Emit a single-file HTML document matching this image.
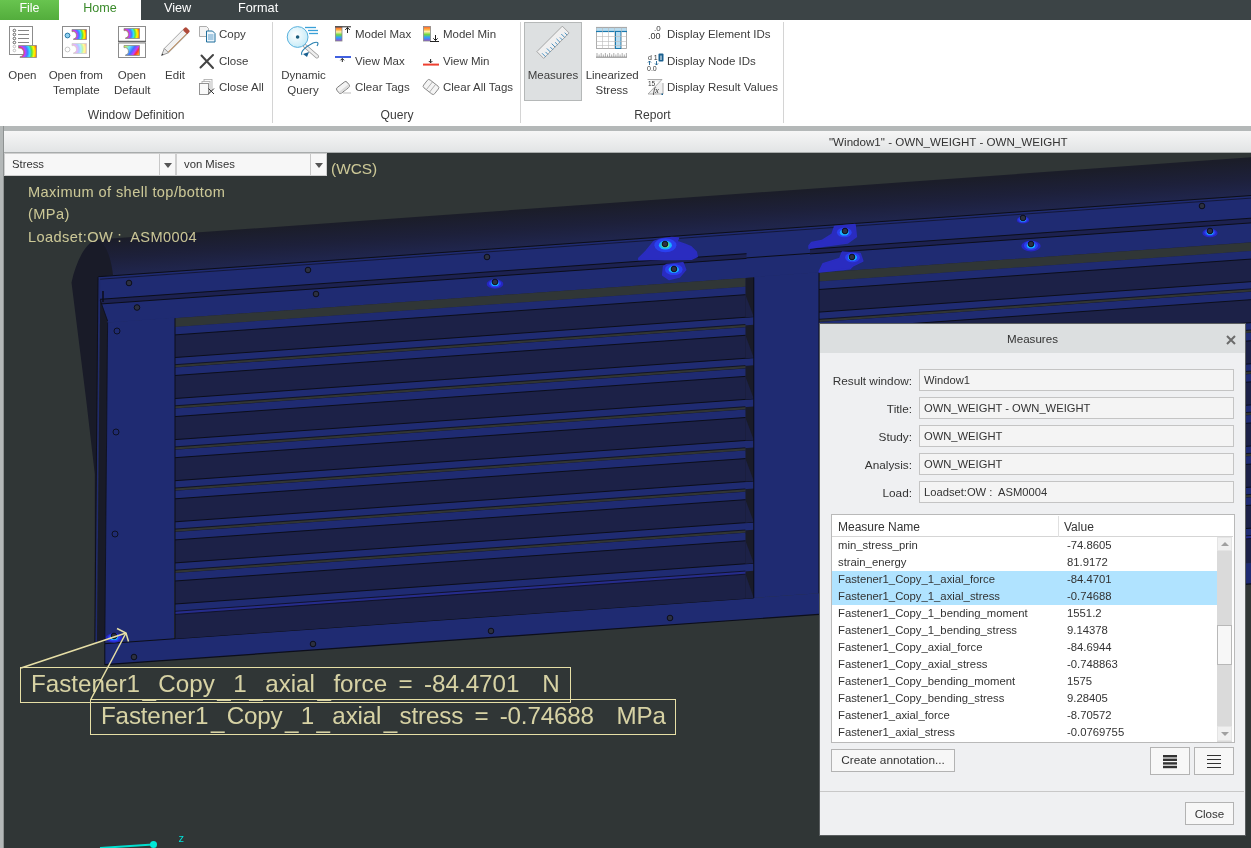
<!DOCTYPE html><html><head><meta charset="utf-8"><style>
*{box-sizing:border-box;margin:0;padding:0}
html,body{width:1251px;height:848px;overflow:hidden;background:#303636;font-family:"Liberation Sans",sans-serif;position:relative}
#root{position:absolute;left:0;top:0;width:1251px;height:848px;will-change:transform;background:#303636}
.abs{position:absolute}
.t{position:absolute;white-space:nowrap;line-height:1}
#tabs{position:absolute;left:0;top:0;width:1251px;height:20px;background:#3c4446}
#file{position:absolute;left:0;top:0;width:59px;height:20px;background:linear-gradient(#68c44f,#53ad3c);color:#fff;font-size:12.5px;text-align:center;line-height:16px}
#home{position:absolute;left:59px;top:0;width:82px;height:20px;background:#fff;color:#3a8a2a;font-size:12.6px;text-align:center;line-height:16px}
.tab{position:absolute;top:0;color:#fff;font-size:12.7px;line-height:16px}
#ribbon{position:absolute;left:0;top:20px;width:1251px;height:106px;background:#fff}
.rl{position:absolute;font-size:11.5px;color:#3c3c3c;white-space:pre;line-height:15px}
.sep{position:absolute;top:22px;width:1px;height:101px;background:#d4d4d4}
#gbar{position:absolute;left:0;top:126px;width:1251px;height:5px;background:#b4b8b8}
#lbar{position:absolute;left:0;top:126px;width:4px;height:722px;background:#b4b8b8;border-right:1px solid #8e9292}
#wtitle{position:absolute;left:4px;top:131px;width:1247px;height:22px;background:linear-gradient(#f6f6f6,#e2e4e5);border-bottom:1px solid #a8acac}
.dd{position:absolute;top:153px;height:23px;background:#f7f7f7;border:1px solid #cfcfcf;font-size:11.3px;color:#333;line-height:21px;padding-left:7px}
.dd .ar{position:absolute;right:0;top:0;width:16px;height:21px;border-left:1px solid #c8c8c8}
.dd .ar:after{content:"";position:absolute;left:4px;top:9px;border-left:4px solid transparent;border-right:4px solid transparent;border-top:5px solid #555}
.ov{position:absolute;color:rgba(232,226,168,0.85);font-size:14.6px;letter-spacing:0.4px;white-space:pre;line-height:1}
.ann{position:absolute;border:1.5px solid #e6dfa6;color:rgba(238,232,180,0.88);font-size:24.2px;white-space:pre;line-height:32px;padding-left:10px}
.us{margin:0 2.5px;position:relative;top:4px}.sp{letter-spacing:4.6px}
#dlg{position:absolute;left:819px;top:323px;width:427px;height:513px;background:#eff0f2;border:1px solid #5a5e60}
#dlgt{position:absolute;left:0;top:0;width:425px;height:29px;background:#dcdfe0;font-size:11.6px;color:#333;text-align:center;line-height:30px}
.lab{position:absolute;font-size:11.8px;color:#333;text-align:right;white-space:nowrap;line-height:14px}
.fld{position:absolute;left:99px;width:315px;height:22px;background:#f4f4f4;border:1px solid #c4c4c4;font-size:11.2px;color:#333;line-height:20px;padding-left:4px;white-space:pre}
#tbl{position:absolute;left:11px;top:190px;width:404px;height:229px;background:#fff;border:1px solid #b9b9b9;overflow:hidden}
.row{position:absolute;left:1px;height:17px;font-size:11.3px;color:#333;line-height:17px;white-space:nowrap}
.btn{position:absolute;background:#f7f7f7;border:1px solid #b3b3b3;font-size:12px;color:#333;text-align:center}
</style></head><body><div id="root">
<div id="tabs"><div id="file">File</div><div id="home">Home</div><div class="tab" style="left:164px">View</div><div class="tab" style="left:238px">Format</div></div>
<div id="ribbon"></div>
<div class="abs" style="left:524px;top:22px;width:58px;height:79px;background:#dde0e1;border:1px solid #b5b8b8"></div>
<div class="rl" style="left:22.4px;top:68px;width:100px;margin-left:-50px;text-align:center">Open</div>
<div class="rl" style="left:75.8px;top:68px;width:100px;margin-left:-50px;text-align:center">Open from</div>
<div class="rl" style="left:76.4px;top:83px;width:100px;margin-left:-50px;text-align:center">Template</div>
<div class="rl" style="left:131.8px;top:68px;width:100px;margin-left:-50px;text-align:center">Open</div>
<div class="rl" style="left:132.2px;top:83px;width:100px;margin-left:-50px;text-align:center">Default</div>
<div class="rl" style="left:175.0px;top:68px;width:100px;margin-left:-50px;text-align:center">Edit</div>
<div class="rl" style="left:303.5px;top:68px;width:100px;margin-left:-50px;text-align:center">Dynamic</div>
<div class="rl" style="left:303.0px;top:83px;width:100px;margin-left:-50px;text-align:center">Query</div>
<div class="rl" style="left:553.0px;top:68px;width:100px;margin-left:-50px;text-align:center">Measures</div>
<div class="rl" style="left:612.2px;top:68px;width:100px;margin-left:-50px;text-align:center">Linearized</div>
<div class="rl" style="left:611.8px;top:83px;width:100px;margin-left:-50px;text-align:center">Stress</div>
<div class="rl" style="left:136.2px;top:108px;width:140px;margin-left:-70px;text-align:center;font-size:12.1px">Window Definition</div>
<div class="rl" style="left:397.0px;top:108px;width:140px;margin-left:-70px;text-align:center;font-size:12.1px">Query</div>
<div class="rl" style="left:652.5px;top:108px;width:140px;margin-left:-70px;text-align:center;font-size:12.1px">Report</div>
<div class="rl" style="left:219px;top:27px">Copy</div>
<div class="rl" style="left:219px;top:54px">Close</div>
<div class="rl" style="left:219px;top:80px">Close All</div>
<div class="rl" style="left:355px;top:27px">Model Max</div>
<div class="rl" style="left:355px;top:54px">View Max</div>
<div class="rl" style="left:355px;top:80px">Clear Tags</div>
<div class="rl" style="left:443px;top:27px">Model Min</div>
<div class="rl" style="left:443px;top:54px">View Min</div>
<div class="rl" style="left:443px;top:80px">Clear All Tags</div>
<div class="rl" style="left:667px;top:27px">Display Element IDs</div>
<div class="rl" style="left:667px;top:54px">Display Node IDs</div>
<div class="rl" style="left:667px;top:80px">Display Result Values</div>
<div class="sep" style="left:272px"></div>
<div class="sep" style="left:520px"></div>
<div class="sep" style="left:783px"></div>
<svg class="abs" style="left:0;top:0" width="800" height="126">
<defs>
<radialGradient id="rg1" gradientUnits="userSpaceOnUse" cx="18.5" cy="52.4" r="19"><stop offset="0.25" stop-color="#ff3030"/><stop offset="0.35" stop-color="#c040ff"/><stop offset="0.48" stop-color="#4080ff"/><stop offset="0.6" stop-color="#30e0ff"/><stop offset="0.7" stop-color="#60e040"/><stop offset="0.82" stop-color="#ffff00"/><stop offset="0.92" stop-color="#ffa000"/><stop offset="1" stop-color="#ff2020"/></radialGradient>
<radialGradient id="rg2" gradientUnits="userSpaceOnUse" cx="72.0" cy="35.3" r="15"><stop offset="0.25" stop-color="#ff3030"/><stop offset="0.35" stop-color="#c040ff"/><stop offset="0.48" stop-color="#4080ff"/><stop offset="0.6" stop-color="#30e0ff"/><stop offset="0.7" stop-color="#60e040"/><stop offset="0.82" stop-color="#ffff00"/><stop offset="0.92" stop-color="#ffa000"/><stop offset="1" stop-color="#ff2020"/></radialGradient>
<radialGradient id="rg3" gradientUnits="userSpaceOnUse" cx="72.0" cy="49.3" r="15"><stop offset="0.25" stop-color="#ff3030"/><stop offset="0.35" stop-color="#c040ff"/><stop offset="0.48" stop-color="#4080ff"/><stop offset="0.6" stop-color="#30e0ff"/><stop offset="0.7" stop-color="#60e040"/><stop offset="0.82" stop-color="#ffff00"/><stop offset="0.92" stop-color="#ffa000"/><stop offset="1" stop-color="#ff2020"/></radialGradient>
<radialGradient id="rg4" gradientUnits="userSpaceOnUse" cx="124.0" cy="34.3" r="16"><stop offset="0.25" stop-color="#ff3030"/><stop offset="0.35" stop-color="#c040ff"/><stop offset="0.48" stop-color="#4080ff"/><stop offset="0.6" stop-color="#30e0ff"/><stop offset="0.7" stop-color="#60e040"/><stop offset="0.82" stop-color="#ffff00"/><stop offset="0.92" stop-color="#ffa000"/><stop offset="1" stop-color="#ff2020"/></radialGradient>
<linearGradient id="rg5" gradientUnits="userSpaceOnUse" x1="124" y1="45" x2="140" y2="56"><stop offset="0" stop-color="#ffff00"/><stop offset="0.3" stop-color="#60e0ff"/><stop offset="0.5" stop-color="#4070ff"/><stop offset="0.65" stop-color="#c040ff"/><stop offset="0.75" stop-color="#ff3030"/><stop offset="1" stop-color="#ffff00"/></linearGradient>
<linearGradient id="bar" x1="0" y1="0" x2="0" y2="1"><stop offset="0" stop-color="#ff5a30"/><stop offset="0.2" stop-color="#ffb040"/><stop offset="0.35" stop-color="#fff0b0"/><stop offset="0.55" stop-color="#70d840"/><stop offset="0.75" stop-color="#30a0ff"/><stop offset="1" stop-color="#9050d0"/></linearGradient>
<radialGradient id="lens" cx="0.4" cy="0.4" r="0.6"><stop offset="0" stop-color="#ffffff"/><stop offset="1" stop-color="#c8ecf8"/></radialGradient>
</defs>
<rect x="9.5" y="26.5" width="23" height="28" fill="#fff" stroke="#8c8c8c" stroke-width="1"/>
<circle cx="14.4" cy="30.5" r="1.3" fill="none" stroke="#555" stroke-width="0.9"/>
<line x1="18" y1="30.5" x2="29" y2="30.5" stroke="#777" stroke-width="0.9"/>
<circle cx="14.4" cy="34.5" r="1.3" fill="none" stroke="#555" stroke-width="0.9"/>
<line x1="18" y1="34.5" x2="29" y2="34.5" stroke="#777" stroke-width="0.9"/>
<circle cx="14.4" cy="38.5" r="1.3" fill="none" stroke="#555" stroke-width="0.9"/>
<line x1="18" y1="38.5" x2="29" y2="38.5" stroke="#777" stroke-width="0.9"/>
<circle cx="14.4" cy="42.5" r="1.3" fill="none" stroke="#555" stroke-width="0.9"/>
<line x1="18" y1="42.5" x2="29" y2="42.5" stroke="#777" stroke-width="0.9"/>
<circle cx="14.4" cy="46.5" r="1.3" fill="none" stroke="#bbb" stroke-width="0.9"/>
<circle cx="14.4" cy="50.5" r="1.3" fill="none" stroke="#bbb" stroke-width="0.9"/>
<path d="M18.5,45.5 L36.5,45.5 L36.5,57.5 L20.0,57.5 L20.0,56.8 A4.3,4.3 0 0 0 18.5,48.1 Z" fill="url(#rg1)" stroke="#8a8a8a" stroke-width="0.8"/>
<rect x="62.5" y="26.5" width="27" height="31" fill="#fff" stroke="#8c8c8c" stroke-width="1"/>
<circle cx="67.5" cy="35.5" r="2.4" fill="#8fd0f0" stroke="#2a7aa8" stroke-width="1"/>
<circle cx="67.5" cy="49.5" r="2.4" fill="#fff" stroke="#c8c8c8" stroke-width="1"/>
<path d="M72.0,29.5 L86.5,29.5 L86.5,39.5 L73.5,39.5 L73.5,38.9 A3.6,3.6 0 0 0 72.0,31.7 Z" fill="url(#rg2)" stroke="#8a8a8a" stroke-width="0.8"/>
<path d="M72.0,43.5 L86.5,43.5 L86.5,53.5 L73.5,53.5 L73.5,52.9 A3.6,3.6 0 0 0 72.0,45.7 Z" fill="url(#rg3)" stroke="#8a8a8a" stroke-width="0.8" opacity="0.4"/>
<rect x="118.5" y="26.5" width="27" height="15" fill="#fff" stroke="#8c8c8c" stroke-width="1"/>
<line x1="118" y1="41.5" x2="146" y2="41.5" stroke="#666" stroke-width="1.5"/>
<rect x="118.5" y="43" width="27" height="14.5" fill="#fff" stroke="#8c8c8c" stroke-width="1"/>
<path d="M124.0,28.5 L139.5,28.5 L139.5,38.5 L125.5,38.5 L125.5,37.9 A3.6,3.6 0 0 0 124.0,30.7 Z" fill="url(#rg4)" stroke="#8a8a8a" stroke-width="0.8"/>
<path d="M124.0,45.5 L139.5,45.5 L139.5,55.5 L125.5,55.5 L125.5,54.9 A3.6,3.6 0 0 0 124.0,47.7 Z" fill="url(#rg5)" stroke="#8a8a8a" stroke-width="0.8"/>
<g transform="translate(161.5,55.5) rotate(-45)"><polygon points="0,0 7,-3 7,3" fill="#e8e8e8" stroke="#777" stroke-width="0.7"/><polygon points="0,0 2,-0.9 2,0.9" fill="#333"/><rect x="7" y="-3" width="27" height="6" fill="#f2f2f2" stroke="#888" stroke-width="0.7"/><line x1="7" y1="2.4" x2="34" y2="2.4" stroke="#b07030" stroke-width="0.9"/><rect x="33" y="-3.2" width="4.5" height="6.4" rx="1.5" fill="#b04a3a"/></g>
<path d="M199.5,26.5 h7 l2,2 v8 h-9 z" fill="#f4f4f4" stroke="#999" stroke-width="0.8"/>
<path d="M206.5,31 h6 l2.5,2.5 v8.5 h-8.5 z" fill="#eef6fb" stroke="#1f6e9c" stroke-width="1"/>
<line x1="208" y1="35" x2="213.5" y2="35" stroke="#3a8ac0" stroke-width="0.8"/>
<line x1="208" y1="37" x2="213.5" y2="37" stroke="#3a8ac0" stroke-width="0.8"/>
<line x1="208" y1="39" x2="213.5" y2="39" stroke="#3a8ac0" stroke-width="0.8"/>
<path d="M200.5,67.5 L213,55 M201.5,55.5 L213,68" stroke="#444" stroke-width="2" stroke-linecap="round"/>
<rect x="204" y="79.5" width="8" height="11" fill="#fafafa" stroke="#aaa" stroke-width="0.8"/>
<rect x="202" y="81.5" width="8" height="11" fill="#fafafa" stroke="#aaa" stroke-width="0.8"/>
<rect x="199.5" y="83.5" width="9" height="11" fill="#fafafa" stroke="#888" stroke-width="0.9"/>
<path d="M208.5,88.5 L214,94 M214,88.5 L208.5,94" stroke="#333" stroke-width="1"/>
<line x1="305" y1="46" x2="317" y2="56.5" stroke="#999" stroke-width="4" stroke-linecap="round"/>
<line x1="305" y1="46" x2="317" y2="56.5" stroke="#eee" stroke-width="2.4" stroke-linecap="round"/>
<circle cx="297.6" cy="37" r="10.4" fill="url(#lens)" stroke="#58b0dc" stroke-width="1"/>
<circle cx="297.6" cy="37" r="1.8" fill="#1a5a7a"/>
<g stroke="#3aa0d8" stroke-width="1.3"><line x1="305" y1="27.5" x2="316" y2="27.5"/><line x1="308" y1="30.5" x2="318" y2="30.5"/><line x1="309" y1="33.5" x2="318" y2="33.5"/></g>
<path d="M302,55 C300,52 305,47 313,43 C318,41 319,43 317,46" fill="none" stroke="#2a80b0" stroke-width="1.1"/>
<polygon points="303,54 309,52 307,57" fill="#1a6090"/>
<rect x="335.5" y="27" width="6.5" height="14" fill="url(#bar)" stroke="#888" stroke-width="0.8"/>
<line x1="335" y1="26.8" x2="351" y2="26.8" stroke="#222" stroke-width="1"/>
<path d="M347.5,33 V27.5 M345.2,30 L347.5,27.5 L349.8,30" fill="none" stroke="#222" stroke-width="1"/>
<line x1="335" y1="57" x2="351" y2="57" stroke="#4060e0" stroke-width="2"/>
<path d="M342.3,62 V58.5 M340.5,60.3 L342.3,58.5 L344.1,60.3" fill="none" stroke="#222" stroke-width="1"/>
<g transform="translate(343,87.5) rotate(-38)"><rect x="-6.5" y="-3.5" width="13" height="7" rx="2" fill="#f4f4f4" stroke="#777" stroke-width="0.9"/><rect x="-6" y="1" width="12" height="2" fill="#ddd"/></g>
<line x1="343" y1="93" x2="351" y2="93" stroke="#aaa" stroke-width="0.8"/>
<rect x="423.5" y="26.5" width="7" height="14.5" fill="url(#bar)" stroke="#888" stroke-width="0.8"/>
<line x1="430" y1="41.5" x2="439" y2="41.5" stroke="#222" stroke-width="1"/>
<path d="M435.5,35 V40.5 M433.3,38.3 L435.5,40.5 L437.7,38.3" fill="none" stroke="#222" stroke-width="1"/>
<line x1="423" y1="64.6" x2="439" y2="64.6" stroke="#ee4030" stroke-width="2"/>
<path d="M430.6,59 V62.8 M428.8,61 L430.6,62.8 L432.4,61" fill="none" stroke="#222" stroke-width="1"/>
<g transform="translate(431,87) rotate(38)"><rect x="-7" y="-5" width="14" height="10" rx="2" fill="#f4f4f4" stroke="#888" stroke-width="0.9"/><line x1="-2" y1="-5" x2="-2" y2="5" stroke="#999" stroke-width="0.7"/><line x1="2" y1="-5" x2="2" y2="5" stroke="#999" stroke-width="0.7"/></g>
<g transform="translate(553,42.3) rotate(-45)"><rect x="-18" y="-4.8" width="36" height="9.6" fill="#f0f0f0" stroke="#9a9a9a" stroke-width="0.8"/>
<line x1="-15.5" y1="5" x2="-15.5" y2="0.0" stroke="#2a80b8" stroke-width="0.8"/>
<line x1="-12.1" y1="5" x2="-12.1" y2="1.5" stroke="#2a80b8" stroke-width="0.8"/>
<line x1="-8.7" y1="5" x2="-8.7" y2="0.0" stroke="#2a80b8" stroke-width="0.8"/>
<line x1="-5.3" y1="5" x2="-5.3" y2="1.5" stroke="#2a80b8" stroke-width="0.8"/>
<line x1="-1.9" y1="5" x2="-1.9" y2="0.0" stroke="#2a80b8" stroke-width="0.8"/>
<line x1="1.5" y1="5" x2="1.5" y2="1.5" stroke="#2a80b8" stroke-width="0.8"/>
<line x1="4.9" y1="5" x2="4.9" y2="0.0" stroke="#2a80b8" stroke-width="0.8"/>
<line x1="8.3" y1="5" x2="8.3" y2="1.5" stroke="#2a80b8" stroke-width="0.8"/>
<line x1="11.7" y1="5" x2="11.7" y2="0.0" stroke="#2a80b8" stroke-width="0.8"/>
<line x1="15.1" y1="5" x2="15.1" y2="1.5" stroke="#2a80b8" stroke-width="0.8"/>
</g>
<rect x="596.5" y="27.5" width="30" height="21" fill="#fff" stroke="#999" stroke-width="0.8"/>
<rect x="596.5" y="27.5" width="30" height="4" fill="#b8dcf0"/>
<line x1="596" y1="27.5" x2="627" y2="27.5" stroke="#aaa" stroke-width="1.2"/>
<line x1="596" y1="31.5" x2="627" y2="31.5" stroke="#1a7ab0" stroke-width="1.2"/>
<rect x="615.5" y="31.5" width="5.5" height="17" fill="#b8dcf0" stroke="#1a7ab0" stroke-width="1"/>
<line x1="602.5" y1="27.5" x2="602.5" y2="48.5" stroke="#bbb" stroke-width="0.6"/>
<line x1="608.5" y1="27.5" x2="608.5" y2="48.5" stroke="#bbb" stroke-width="0.6"/>
<line x1="614.5" y1="27.5" x2="614.5" y2="48.5" stroke="#bbb" stroke-width="0.6"/>
<line x1="621.5" y1="27.5" x2="621.5" y2="48.5" stroke="#bbb" stroke-width="0.6"/>
<line x1="596.5" y1="36.5" x2="626.5" y2="36.5" stroke="#bbb" stroke-width="0.6"/>
<line x1="596.5" y1="41.5" x2="626.5" y2="41.5" stroke="#bbb" stroke-width="0.6"/>
<line x1="596.5" y1="45.5" x2="626.5" y2="45.5" stroke="#bbb" stroke-width="0.6"/>
<line x1="596" y1="57.2" x2="627" y2="57.2" stroke="#777" stroke-width="0.9"/>
<line x1="597.0" y1="57" x2="597.0" y2="53.0" stroke="#777" stroke-width="0.6"/>
<line x1="599.1" y1="57" x2="599.1" y2="54.5" stroke="#777" stroke-width="0.6"/>
<line x1="601.2" y1="57" x2="601.2" y2="53.0" stroke="#777" stroke-width="0.6"/>
<line x1="603.3" y1="57" x2="603.3" y2="54.5" stroke="#777" stroke-width="0.6"/>
<line x1="605.4" y1="57" x2="605.4" y2="53.0" stroke="#777" stroke-width="0.6"/>
<line x1="607.5" y1="57" x2="607.5" y2="54.5" stroke="#777" stroke-width="0.6"/>
<line x1="609.6" y1="57" x2="609.6" y2="53.0" stroke="#777" stroke-width="0.6"/>
<line x1="611.7" y1="57" x2="611.7" y2="54.5" stroke="#777" stroke-width="0.6"/>
<line x1="613.8" y1="57" x2="613.8" y2="53.0" stroke="#777" stroke-width="0.6"/>
<line x1="615.9" y1="57" x2="615.9" y2="54.5" stroke="#777" stroke-width="0.6"/>
<line x1="618.0" y1="57" x2="618.0" y2="53.0" stroke="#777" stroke-width="0.6"/>
<line x1="620.1" y1="57" x2="620.1" y2="54.5" stroke="#777" stroke-width="0.6"/>
<line x1="622.2" y1="57" x2="622.2" y2="53.0" stroke="#777" stroke-width="0.6"/>
<line x1="624.3" y1="57" x2="624.3" y2="54.5" stroke="#777" stroke-width="0.6"/>
<line x1="626.4" y1="57" x2="626.4" y2="53.0" stroke="#777" stroke-width="0.6"/>
<text x="648" y="38.5" font-family="Liberation Sans" font-size="9" fill="#333">.00</text>
<text x="654" y="31" font-family="Liberation Sans" font-size="8" fill="#333">.0</text>
<text x="648" y="60" font-family="Liberation Sans" font-size="7" fill="#333">d 1</text>
<path d="M649.5,65 v-4 M648,62.5 l1.5,-1.5 l1.5,1.5 M656.5,61 v4 M655,63.5 l1.5,1.5 l1.5,-1.5" fill="none" stroke="#1a6090" stroke-width="0.9"/>
<text x="647" y="70.5" font-family="Liberation Sans" font-size="7" fill="#333">0.0</text>
<rect x="658.5" y="53.5" width="5" height="8" rx="1" fill="#1a6090"/>
<rect x="660.5" y="55.5" width="1" height="4.5" fill="#fff"/>
<path d="M647.5,79.5 H662 L648,94 H663 V83" fill="#f0f0f0" stroke="#999" stroke-width="0.8"/>
<text x="648" y="86" font-family="Liberation Sans" font-size="6.5" fill="#333">15</text>
<text x="653" y="93" font-family="Liberation Serif" font-style="italic" font-size="8" fill="#222">fx</text>
<rect x="661.5" y="93.5" width="1.5" height="1.5" fill="#1a6090"/>
</svg>
<div id="gbar"></div><div id="lbar"></div>
<div id="wtitle"><div class="t" style="left:825px;top:5px;font-size:11.6px;color:#333">"Window1" - OWN_WEIGHT - OWN_WEIGHT</div></div>
<div class="dd" style="left:4px;width:172px">Stress<div class="ar"></div></div>
<div class="dd" style="left:176px;width:151px">von Mises<div class="ar"></div></div>
<svg width="1251" height="848" viewBox="0 0 1251 848" style="position:absolute;left:0;top:0">
<defs><linearGradient id="roof" gradientUnits="userSpaceOnUse" x1="100" y1="239.5" x2="102.6" y2="277"><stop offset="0" stop-color="#1b1d29"/><stop offset="0.5" stop-color="#1d203a"/><stop offset="1" stop-color="#20264f"/></linearGradient><radialGradient id="glow"><stop offset="0" stop-color="#40ffb0"/><stop offset="0.25" stop-color="#18c0ff"/><stop offset="0.5" stop-color="#1a40e8"/><stop offset="1" stop-color="#2a2ad8" stop-opacity="0"/></radialGradient></defs>
<polygon points="97.0,239.6 1251.0,157.3 1251.0,195.9 98.0,277.1" fill="url(#roof)"/>
<path d="M71.5,282.4 C76,262 85,243 96,240 C106,242 111,258 113,275 L98.5,277 L95.3,642 L94.8,642 L94.8,474 L86.2,400 Z" fill="#191b28"/>
<polygon points="98.5,277.1 1251.0,195.9 1251.0,242.4 98.5,323.6" fill="#1f2b72"/>
<line x1="98.5" y1="276.7" x2="1251.0" y2="195.5" stroke="#0c0e1a" stroke-width="1"/>
<line x1="98.5" y1="279.3" x2="1251.0" y2="198.1" stroke="#141838" stroke-width="1"/>
<polygon points="100.0,299.3 746.5,253.7 746.5,258.4 100.0,304.0" fill="#1c2150"/>
<line x1="100.0" y1="299.3" x2="746.5" y2="253.7" stroke="#0c0e1a" stroke-width="1"/>
<line x1="100.0" y1="304.0" x2="746.5" y2="258.4" stroke="#0c0e1a" stroke-width="1"/>
<polygon points="810.0,249.2 1251.0,218.2 1251.0,222.9 810.0,253.9" fill="#1c2150"/>
<line x1="810.0" y1="249.2" x2="1251.0" y2="218.2" stroke="#0c0e1a" stroke-width="1"/>
<line x1="810.0" y1="253.9" x2="1251.0" y2="222.9" stroke="#0c0e1a" stroke-width="1"/>
<line x1="746.5" y1="257.9" x2="810.0" y2="253.4" stroke="#0c0e1a" stroke-width="1"/>
<polygon points="98.5,277 100.2,277 97,642 95.3,642" fill="#1f2a6c"/>
<line x1="98" y1="277" x2="94.8" y2="642" stroke="#0c0e1a" stroke-width="0.8"/>
<polygon points="100.2,300 107.6,320.5 104.8,642 97,642" fill="#191b28"/>
<line x1="103" y1="291" x2="103" y2="302" stroke="#0c0e1a" stroke-width="1.5"/>
<line x1="100.2" y1="300" x2="107.6" y2="321" stroke="#0c0e1a" stroke-width="0.8"/>
<polygon points="107.6,322.5 176.0,317.6 174.0,638.8 104.8,643.7" fill="#1f2b72"/>
<line x1="107.6" y1="322.5" x2="104.8" y2="643.7" stroke="#0c0e1a" stroke-width="0.8"/>
<polygon points="753.8,276.9 819.0,272.3 819.0,593.3 753.8,597.9" fill="#1f2b72"/>
<polygon points="104.8,643.7 1251.0,562.9 1251.0,583.9 104.8,664.7" fill="#1f2b72"/>
<line x1="104.8" y1="643.7" x2="753.8" y2="597.9" stroke="#0c0e1a" stroke-width="1"/>
<line x1="104.8" y1="664.7" x2="1251.0" y2="583.9" stroke="#0c0e1a" stroke-width="1.2"/>
<line x1="104.8" y1="643.7" x2="104.8" y2="664.7" stroke="#0c0e1a" stroke-width="1"/>
<polygon points="175.0,318.2 753.8,277.4 753.8,597.9 175.0,638.7" fill="#1c2147"/>
<polygon points="745.4,278.0 753.8,277.4 753.8,597.9 745.4,598.5" fill="#191b28"/>
<polygon points="175.0,318.2 745.4,278.0 745.4,286.7 175.0,326.9" fill="#303636"/>
<polygon points="175.0,326.9 745.4,286.7 745.4,294.7 175.0,334.9" fill="#1f2b72"/>
<line x1="175.0" y1="334.9" x2="745.4" y2="294.7" stroke="#0c0e1a" stroke-width="1"/>
<polygon points="175.0,357.5 753.8,316.7 753.8,324.7 175.0,365.5" fill="#1f2b72"/>
<line x1="175.0" y1="357.5" x2="753.8" y2="316.7" stroke="#0c0e1a" stroke-width="1"/>
<polygon points="175.0,364.7 745.4,324.5 745.4,327.6 175.0,367.8" fill="#323634"/>
<line x1="175.0" y1="364.7" x2="745.4" y2="324.5" stroke="#0c0e1a" stroke-width="0.8"/>
<line x1="175.0" y1="367.8" x2="745.4" y2="327.6" stroke="#0c0e1a" stroke-width="0.8"/>
<polygon points="175.0,367.5 745.4,327.3 745.4,335.3 175.0,375.5" fill="#1f2b72"/>
<line x1="175.0" y1="375.5" x2="745.4" y2="335.3" stroke="#0c0e1a" stroke-width="1"/>
<polygon points="175.0,398.5 753.8,357.7 753.8,365.3 175.0,406.1" fill="#1f2b72"/>
<line x1="175.0" y1="398.5" x2="753.8" y2="357.7" stroke="#0c0e1a" stroke-width="1"/>
<polygon points="175.0,405.8 745.4,365.6 745.4,368.7 175.0,408.9" fill="#323634"/>
<line x1="175.0" y1="405.8" x2="745.4" y2="365.6" stroke="#0c0e1a" stroke-width="0.8"/>
<line x1="175.0" y1="408.9" x2="745.4" y2="368.7" stroke="#0c0e1a" stroke-width="0.8"/>
<polygon points="175.0,408.6 745.4,368.4 745.4,376.4 175.0,416.6" fill="#1f2b72"/>
<line x1="175.0" y1="416.6" x2="745.4" y2="376.4" stroke="#0c0e1a" stroke-width="1"/>
<polygon points="175.0,439.6 753.8,398.8 753.8,406.4 175.0,447.2" fill="#1f2b72"/>
<line x1="175.0" y1="439.6" x2="753.8" y2="398.8" stroke="#0c0e1a" stroke-width="1"/>
<polygon points="175.0,446.9 745.4,406.7 745.4,409.8 175.0,450.0" fill="#323634"/>
<line x1="175.0" y1="446.9" x2="745.4" y2="406.7" stroke="#0c0e1a" stroke-width="0.8"/>
<line x1="175.0" y1="450.0" x2="745.4" y2="409.8" stroke="#0c0e1a" stroke-width="0.8"/>
<polygon points="175.0,449.7 745.4,409.5 745.4,417.5 175.0,457.7" fill="#1f2b72"/>
<line x1="175.0" y1="457.7" x2="745.4" y2="417.5" stroke="#0c0e1a" stroke-width="1"/>
<polygon points="175.0,480.7 753.8,439.9 753.8,447.5 175.0,488.3" fill="#1f2b72"/>
<line x1="175.0" y1="480.7" x2="753.8" y2="439.9" stroke="#0c0e1a" stroke-width="1"/>
<polygon points="175.0,488.0 745.4,447.8 745.4,450.9 175.0,491.1" fill="#323634"/>
<line x1="175.0" y1="488.0" x2="745.4" y2="447.8" stroke="#0c0e1a" stroke-width="0.8"/>
<line x1="175.0" y1="491.1" x2="745.4" y2="450.9" stroke="#0c0e1a" stroke-width="0.8"/>
<polygon points="175.0,490.8 745.4,450.6 745.4,458.6 175.0,498.8" fill="#1f2b72"/>
<line x1="175.0" y1="498.8" x2="745.4" y2="458.6" stroke="#0c0e1a" stroke-width="1"/>
<polygon points="175.0,521.8 753.8,481.0 753.8,488.6 175.0,529.4" fill="#1f2b72"/>
<line x1="175.0" y1="521.8" x2="753.8" y2="481.0" stroke="#0c0e1a" stroke-width="1"/>
<polygon points="175.0,529.1 745.4,488.9 745.4,492.0 175.0,532.2" fill="#323634"/>
<line x1="175.0" y1="529.1" x2="745.4" y2="488.9" stroke="#0c0e1a" stroke-width="0.8"/>
<line x1="175.0" y1="532.2" x2="745.4" y2="492.0" stroke="#0c0e1a" stroke-width="0.8"/>
<polygon points="175.0,531.9 745.4,491.7 745.4,499.7 175.0,539.9" fill="#1f2b72"/>
<line x1="175.0" y1="539.9" x2="745.4" y2="499.7" stroke="#0c0e1a" stroke-width="1"/>
<polygon points="175.0,562.9 753.8,522.1 753.8,529.7 175.0,570.5" fill="#1f2b72"/>
<line x1="175.0" y1="562.9" x2="753.8" y2="522.1" stroke="#0c0e1a" stroke-width="1"/>
<polygon points="175.0,570.2 745.4,530.0 745.4,533.1 175.0,573.3" fill="#323634"/>
<line x1="175.0" y1="570.2" x2="745.4" y2="530.0" stroke="#0c0e1a" stroke-width="0.8"/>
<line x1="175.0" y1="573.3" x2="745.4" y2="533.1" stroke="#0c0e1a" stroke-width="0.8"/>
<polygon points="175.0,573.0 745.4,532.8 745.4,540.8 175.0,581.0" fill="#1f2b72"/>
<line x1="175.0" y1="581.0" x2="745.4" y2="540.8" stroke="#0c0e1a" stroke-width="1"/>
<polygon points="175.0,604.0 753.8,563.2 753.8,570.8 175.0,611.6" fill="#1f2b72"/>
<line x1="175.0" y1="604.0" x2="753.8" y2="563.2" stroke="#0c0e1a" stroke-width="1"/>
<polygon points="175.0,611.3 745.4,571.1 745.4,574.2 175.0,614.4" fill="#262c8c"/>
<line x1="175.0" y1="611.3" x2="745.4" y2="571.1" stroke="#0c0e1a" stroke-width="0.8"/>
<line x1="175.0" y1="614.4" x2="745.4" y2="574.2" stroke="#0c0e1a" stroke-width="0.8"/>
<polygon points="745.4,294.7 753.8,316.7 745.4,317.3" fill="#1c2147"/>
<polygon points="745.4,335.3 753.8,357.7 745.4,358.3" fill="#1c2147"/>
<polygon points="745.4,376.4 753.8,398.8 745.4,399.4" fill="#1c2147"/>
<polygon points="745.4,417.5 753.8,439.9 745.4,440.5" fill="#1c2147"/>
<polygon points="745.4,458.6 753.8,481.0 745.4,481.6" fill="#1c2147"/>
<polygon points="745.4,499.7 753.8,522.1 745.4,522.7" fill="#1c2147"/>
<polygon points="745.4,540.8 753.8,563.2 745.4,563.8" fill="#1c2147"/>
<polygon points="745.4,573.9 753.8,597.9 745.4,598.5" fill="#1c2147"/>
<line x1="175.0" y1="318.2" x2="175.0" y2="638.7" stroke="#0c0e1a"/>
<line x1="753.8" y1="277.4" x2="753.8" y2="597.9" stroke="#0c0e1a"/>
<polygon points="819.0,272.8 1262.0,241.6 1262.0,562.1 819.0,593.3" fill="#1c2147"/>
<polygon points="1253.6,242.2 1262.0,241.6 1262.0,562.1 1253.6,562.7" fill="#191b28"/>
<polygon points="819.0,272.8 1253.6,242.2 1253.6,250.9 819.0,281.5" fill="#303636"/>
<polygon points="819.0,281.5 1253.6,250.9 1253.6,258.9 819.0,289.5" fill="#1f2b72"/>
<line x1="819.0" y1="289.5" x2="1253.6" y2="258.9" stroke="#0c0e1a" stroke-width="1"/>
<polygon points="819.0,312.1 1262.0,280.9 1262.0,288.9 819.0,320.1" fill="#1f2b72"/>
<line x1="819.0" y1="312.1" x2="1262.0" y2="280.9" stroke="#0c0e1a" stroke-width="1"/>
<polygon points="819.0,319.3 1253.6,288.7 1253.6,291.8 819.0,322.4" fill="#323634"/>
<line x1="819.0" y1="319.3" x2="1253.6" y2="288.7" stroke="#0c0e1a" stroke-width="0.8"/>
<line x1="819.0" y1="322.4" x2="1253.6" y2="291.8" stroke="#0c0e1a" stroke-width="0.8"/>
<polygon points="819.0,322.1 1253.6,291.5 1253.6,299.5 819.0,330.1" fill="#1f2b72"/>
<line x1="819.0" y1="330.1" x2="1253.6" y2="299.5" stroke="#0c0e1a" stroke-width="1"/>
<polygon points="819.0,353.1 1262.0,321.9 1262.0,329.5 819.0,360.7" fill="#1f2b72"/>
<line x1="819.0" y1="353.1" x2="1262.0" y2="321.9" stroke="#0c0e1a" stroke-width="1"/>
<polygon points="819.0,360.4 1253.6,329.8 1253.6,332.9 819.0,363.5" fill="#323634"/>
<line x1="819.0" y1="360.4" x2="1253.6" y2="329.8" stroke="#0c0e1a" stroke-width="0.8"/>
<line x1="819.0" y1="363.5" x2="1253.6" y2="332.9" stroke="#0c0e1a" stroke-width="0.8"/>
<polygon points="819.0,363.2 1253.6,332.6 1253.6,340.6 819.0,371.2" fill="#1f2b72"/>
<line x1="819.0" y1="371.2" x2="1253.6" y2="340.6" stroke="#0c0e1a" stroke-width="1"/>
<polygon points="819.0,394.2 1262.0,363.0 1262.0,370.6 819.0,401.8" fill="#1f2b72"/>
<line x1="819.0" y1="394.2" x2="1262.0" y2="363.0" stroke="#0c0e1a" stroke-width="1"/>
<polygon points="819.0,401.5 1253.6,370.9 1253.6,374.0 819.0,404.6" fill="#323634"/>
<line x1="819.0" y1="401.5" x2="1253.6" y2="370.9" stroke="#0c0e1a" stroke-width="0.8"/>
<line x1="819.0" y1="404.6" x2="1253.6" y2="374.0" stroke="#0c0e1a" stroke-width="0.8"/>
<polygon points="819.0,404.3 1253.6,373.7 1253.6,381.7 819.0,412.3" fill="#1f2b72"/>
<line x1="819.0" y1="412.3" x2="1253.6" y2="381.7" stroke="#0c0e1a" stroke-width="1"/>
<polygon points="819.0,435.3 1262.0,404.1 1262.0,411.7 819.0,442.9" fill="#1f2b72"/>
<line x1="819.0" y1="435.3" x2="1262.0" y2="404.1" stroke="#0c0e1a" stroke-width="1"/>
<polygon points="819.0,442.6 1253.6,412.0 1253.6,415.1 819.0,445.7" fill="#323634"/>
<line x1="819.0" y1="442.6" x2="1253.6" y2="412.0" stroke="#0c0e1a" stroke-width="0.8"/>
<line x1="819.0" y1="445.7" x2="1253.6" y2="415.1" stroke="#0c0e1a" stroke-width="0.8"/>
<polygon points="819.0,445.4 1253.6,414.8 1253.6,422.8 819.0,453.4" fill="#1f2b72"/>
<line x1="819.0" y1="453.4" x2="1253.6" y2="422.8" stroke="#0c0e1a" stroke-width="1"/>
<polygon points="819.0,476.4 1262.0,445.2 1262.0,452.8 819.0,484.0" fill="#1f2b72"/>
<line x1="819.0" y1="476.4" x2="1262.0" y2="445.2" stroke="#0c0e1a" stroke-width="1"/>
<polygon points="819.0,483.7 1253.6,453.1 1253.6,456.2 819.0,486.8" fill="#323634"/>
<line x1="819.0" y1="483.7" x2="1253.6" y2="453.1" stroke="#0c0e1a" stroke-width="0.8"/>
<line x1="819.0" y1="486.8" x2="1253.6" y2="456.2" stroke="#0c0e1a" stroke-width="0.8"/>
<polygon points="819.0,486.5 1253.6,455.9 1253.6,463.9 819.0,494.5" fill="#1f2b72"/>
<line x1="819.0" y1="494.5" x2="1253.6" y2="463.9" stroke="#0c0e1a" stroke-width="1"/>
<polygon points="819.0,517.5 1262.0,486.3 1262.0,493.9 819.0,525.1" fill="#1f2b72"/>
<line x1="819.0" y1="517.5" x2="1262.0" y2="486.3" stroke="#0c0e1a" stroke-width="1"/>
<polygon points="819.0,524.8 1253.6,494.2 1253.6,497.3 819.0,527.9" fill="#323634"/>
<line x1="819.0" y1="524.8" x2="1253.6" y2="494.2" stroke="#0c0e1a" stroke-width="0.8"/>
<line x1="819.0" y1="527.9" x2="1253.6" y2="497.3" stroke="#0c0e1a" stroke-width="0.8"/>
<polygon points="819.0,527.6 1253.6,497.0 1253.6,505.0 819.0,535.6" fill="#1f2b72"/>
<line x1="819.0" y1="535.6" x2="1253.6" y2="505.0" stroke="#0c0e1a" stroke-width="1"/>
<polygon points="819.0,558.6 1262.0,527.4 1262.0,535.0 819.0,566.2" fill="#1f2b72"/>
<line x1="819.0" y1="558.6" x2="1262.0" y2="527.4" stroke="#0c0e1a" stroke-width="1"/>
<polygon points="819.0,565.9 1253.6,535.3 1253.6,538.4 819.0,569.0" fill="#262c8c"/>
<line x1="819.0" y1="565.9" x2="1253.6" y2="535.3" stroke="#0c0e1a" stroke-width="0.8"/>
<line x1="819.0" y1="569.0" x2="1253.6" y2="538.4" stroke="#0c0e1a" stroke-width="0.8"/>
<polygon points="1253.6,258.9 1262.0,280.9 1253.6,281.5" fill="#1c2147"/>
<polygon points="1253.6,299.5 1262.0,321.9 1253.6,322.5" fill="#1c2147"/>
<polygon points="1253.6,340.6 1262.0,363.0 1253.6,363.6" fill="#1c2147"/>
<polygon points="1253.6,381.7 1262.0,404.1 1253.6,404.7" fill="#1c2147"/>
<polygon points="1253.6,422.8 1262.0,445.2 1253.6,445.8" fill="#1c2147"/>
<polygon points="1253.6,463.9 1262.0,486.3 1253.6,486.9" fill="#1c2147"/>
<polygon points="1253.6,505.0 1262.0,527.4 1253.6,528.0" fill="#1c2147"/>
<polygon points="1253.6,538.1 1262.0,562.1 1253.6,562.7" fill="#1c2147"/>
<line x1="819.0" y1="272.8" x2="819.0" y2="593.3" stroke="#0c0e1a"/>
<line x1="1262.0" y1="241.6" x2="1262.0" y2="562.1" stroke="#0c0e1a"/>
<polygon points="638.8,258.3 645.9,251.3 653.9,241.5 660.9,238.9 671.6,237.5 678.6,238.0 676.9,241.5 684.8,244.2 691.0,246.8 696.3,252.1 697.2,256.6 691.9,259.2 674.2,259.6 638.8,259.6" fill="#2a2cc0" stroke="#2a2cc0" stroke-width="1.5" stroke-linejoin="round"/>
<polygon points="663.6,266.3 667.1,264.5 683.0,262.7 685.7,269.8 679.5,276.9 668.9,279.5 662.7,275.1" fill="#2a2cc0" stroke="#2a2cc0" stroke-width="1.5" stroke-linejoin="round"/>
<polygon points="809.0,245.7 811.6,242.5 821.8,240.6 832.0,234.2 834.6,226.5 855.0,224.6 856.4,236.7 847.4,243.1 809.0,248.2" fill="#2a2cc0" stroke="#2a2cc0" stroke-width="1.5" stroke-linejoin="round"/>
<polygon points="819.3,271.3 823.1,263.6 839.7,258.5 842.3,252.1 860.2,253.4 862.8,261.0 852.5,266.2 850.0,268.7 819.3,271.9" fill="#2a2cc0" stroke="#2a2cc0" stroke-width="1.5" stroke-linejoin="round"/>
<ellipse cx="665.4" cy="245.2" rx="11.0" ry="7.0" fill="#2a40f0"/>
<ellipse cx="665.4" cy="245.2" rx="6.5" ry="4.4" fill="#18b0ff"/>
<ellipse cx="665.4" cy="244.7" rx="4.0" ry="3.0" fill="#60e880"/>
<ellipse cx="673.8" cy="269.5" rx="8.8" ry="5.6" fill="#2a40f0"/>
<ellipse cx="673.8" cy="269.5" rx="5.2" ry="3.6" fill="#18b0ff"/>
<ellipse cx="673.8" cy="269.0" rx="3.0" ry="2.2" fill="#60e880"/>
<ellipse cx="495.0" cy="284.0" rx="8.3" ry="4.7" fill="#2626c4"/>
<ellipse cx="495.0" cy="283.5" rx="6.0" ry="4.0" fill="#2a40f0"/>
<ellipse cx="495.0" cy="283.5" rx="3.8" ry="2.6" fill="#18b0ff"/>
<ellipse cx="844.3" cy="232.5" rx="7.4" ry="4.8" fill="#2a40f0"/>
<ellipse cx="844.3" cy="232.5" rx="4.5" ry="3.1" fill="#18b0ff"/>
<ellipse cx="852.5" cy="257.5" rx="7.4" ry="4.8" fill="#2a40f0"/>
<ellipse cx="852.5" cy="257.5" rx="4.5" ry="3.1" fill="#18b0ff"/>
<ellipse cx="1031.0" cy="246.0" rx="9.7" ry="5.4" fill="#2626c4"/>
<ellipse cx="1031.0" cy="245.5" rx="7.0" ry="4.5" fill="#2a40f0"/>
<ellipse cx="1031.0" cy="245.5" rx="4.2" ry="3.0" fill="#18b0ff"/>
<ellipse cx="1023.0" cy="220.0" rx="6.2" ry="3.6" fill="#2626c4"/>
<ellipse cx="1023.0" cy="219.5" rx="4.7" ry="3.1" fill="#2a40f0"/>
<ellipse cx="1023.0" cy="219.5" rx="3.0" ry="2.2" fill="#18b0ff"/>
<ellipse cx="1210.0" cy="233.0" rx="7.6" ry="4.3" fill="#2626c4"/>
<ellipse cx="1210.0" cy="232.5" rx="5.6" ry="3.7" fill="#2a40f0"/>
<ellipse cx="1210.0" cy="232.5" rx="3.5" ry="2.5" fill="#18b0ff"/>
<ellipse cx="114.0" cy="638.0" rx="8.3" ry="4.7" fill="#2626c4"/>
<ellipse cx="114.0" cy="637.5" rx="6.0" ry="4.0" fill="#2a40f0"/>
<ellipse cx="114.0" cy="637.5" rx="3.8" ry="2.6" fill="#18b0ff"/>
<circle cx="129" cy="283" r="2.8" fill="#2c3040" stroke="#0c0e1a" stroke-width="1"/>
<circle cx="308" cy="270" r="2.8" fill="#2c3040" stroke="#0c0e1a" stroke-width="1"/>
<circle cx="487" cy="257" r="2.8" fill="#2c3040" stroke="#0c0e1a" stroke-width="1"/>
<circle cx="665" cy="244" r="2.8" fill="#2c3040" stroke="#0c0e1a" stroke-width="1"/>
<circle cx="845" cy="231" r="2.8" fill="#2c3040" stroke="#0c0e1a" stroke-width="1"/>
<circle cx="1023" cy="218" r="2.8" fill="#2c3040" stroke="#0c0e1a" stroke-width="1"/>
<circle cx="1202" cy="206" r="2.8" fill="#2c3040" stroke="#0c0e1a" stroke-width="1"/>
<circle cx="137" cy="307.5" r="2.8" fill="#2c3040" stroke="#0c0e1a" stroke-width="1"/>
<circle cx="316" cy="294" r="2.8" fill="#2c3040" stroke="#0c0e1a" stroke-width="1"/>
<circle cx="495" cy="282" r="2.8" fill="#2c3040" stroke="#0c0e1a" stroke-width="1"/>
<circle cx="674" cy="269" r="2.8" fill="#2c3040" stroke="#0c0e1a" stroke-width="1"/>
<circle cx="852" cy="257" r="2.8" fill="#2c3040" stroke="#0c0e1a" stroke-width="1"/>
<circle cx="1031" cy="244" r="2.8" fill="#2c3040" stroke="#0c0e1a" stroke-width="1"/>
<circle cx="1210" cy="231" r="2.8" fill="#2c3040" stroke="#0c0e1a" stroke-width="1"/>
<circle cx="117" cy="331" r="3" fill="none" stroke="#0c0e1a" stroke-width="0.9"/>
<circle cx="116" cy="432" r="3" fill="none" stroke="#0c0e1a" stroke-width="0.9"/>
<circle cx="115" cy="534" r="3" fill="none" stroke="#0c0e1a" stroke-width="0.9"/>
<circle cx="114" cy="636" r="2.8" fill="#2c3040" stroke="#0c0e1a" stroke-width="1"/>
<circle cx="134" cy="657" r="2.8" fill="#2c3040" stroke="#0c0e1a" stroke-width="1"/>
<circle cx="313" cy="644" r="2.8" fill="#2c3040" stroke="#0c0e1a" stroke-width="1"/>
<circle cx="491" cy="631" r="2.8" fill="#2c3040" stroke="#0c0e1a" stroke-width="1"/>
<circle cx="670" cy="618" r="2.8" fill="#2c3040" stroke="#0c0e1a" stroke-width="1"/>
</svg>
<div class="ov" style="left:331px;top:161px;font-size:15.4px;letter-spacing:0">(WCS)</div>
<div class="ov" style="left:28px;top:184.5px">Maximum of shell top/bottom</div>
<div class="ov" style="left:28px;top:207px">(MPa)</div>
<div class="ov" style="left:28px;top:229.5px">Loadset:OW :  ASM0004</div>
<div class="ann" style="left:20px;top:667px;width:551px;height:36px">Fastener1<span class="us">_</span>Copy<span class="us">_</span>1<span class="us">_</span>axial<span class="us">_</span>force<span class="sp"> </span>=<span class="sp"> </span>-84.4701<span class="sp"> </span><span class="sp"> </span>N</div>
<div class="ann" style="left:90px;top:699px;width:586px;height:36px;letter-spacing:-0.17px">Fastener1<span class="us">_</span>Copy<span class="us">_</span>1<span class="us">_</span>axial<span class="us">_</span>stress<span class="sp"> </span>=<span class="sp"> </span>-0.74688<span class="sp"> </span><span class="sp"> </span>MPa</div>
<svg class="abs" style="left:0;top:0" width="1251" height="848"><g stroke="#e6dfa6" stroke-width="1.5" fill="none"><line x1="21" y1="668" x2="126" y2="633"/><line x1="91" y1="699" x2="126" y2="633"/><polyline points="117,628.5 126,633 128.5,641.5"/></g><line x1="100" y1="848" x2="153" y2="844.5" stroke="#00e0d0" stroke-width="2"/><circle cx="153.5" cy="844.5" r="3.5" fill="#00e8d8"/><text x="178.5" y="841.8" font-size="11" fill="#00e0d8" font-family="Liberation Sans">z</text></svg>
<div id="dlg"><div id="dlgt">Measures</div>
<svg class="abs" style="left:406px;top:11px" width="10" height="10"><path d="M1,1 L9,9 M9,1 L1,9" stroke="#6b6b6b" stroke-width="2"/></svg>
<div class="lab" style="right:333px;top:50px">Result window:</div>
<div class="fld" style="top:45px">Window1</div>
<div class="lab" style="right:333px;top:78px">Title:</div>
<div class="fld" style="top:73px">OWN_WEIGHT - OWN_WEIGHT</div>
<div class="lab" style="right:333px;top:106px">Study:</div>
<div class="fld" style="top:101px">OWN_WEIGHT</div>
<div class="lab" style="right:333px;top:134px">Analysis:</div>
<div class="fld" style="top:129px">OWN_WEIGHT</div>
<div class="lab" style="right:333px;top:162px">Load:</div>
<div class="fld" style="top:157px">Loadset:OW :  ASM0004</div>
<div id="tbl">
<div class="abs" style="left:0;top:0;width:401px;height:22px;background:#fff;border-bottom:1px solid #d5d5d5"></div>
<div class="abs" style="left:226px;top:1px;width:1px;height:21px;background:#e0e0e0"></div>
<div class="row" style="top:4px;left:6px;font-size:12px">Measure Name</div><div class="row" style="top:4px;left:232px;font-size:12px">Value</div>
<div class="abs" style="left:0;top:22px;width:385px;height:17px;"></div>
<div class="row" style="top:22px;left:6px">min_stress_prin</div>
<div class="row" style="top:22px;left:235px">-74.8605</div>
<div class="abs" style="left:0;top:39px;width:385px;height:17px;"></div>
<div class="row" style="top:39px;left:6px">strain_energy</div>
<div class="row" style="top:39px;left:235px">81.9172</div>
<div class="abs" style="left:0;top:56px;width:385px;height:17px;background:#b0e3ff;"></div>
<div class="row" style="top:56px;left:6px">Fastener1_Copy_1_axial_force</div>
<div class="row" style="top:56px;left:235px">-84.4701</div>
<div class="abs" style="left:0;top:73px;width:385px;height:17px;background:#b0e3ff;"></div>
<div class="row" style="top:73px;left:6px">Fastener1_Copy_1_axial_stress</div>
<div class="row" style="top:73px;left:235px">-0.74688</div>
<div class="abs" style="left:0;top:90px;width:385px;height:17px;"></div>
<div class="row" style="top:90px;left:6px">Fastener1_Copy_1_bending_moment</div>
<div class="row" style="top:90px;left:235px">1551.2</div>
<div class="abs" style="left:0;top:107px;width:385px;height:17px;"></div>
<div class="row" style="top:107px;left:6px">Fastener1_Copy_1_bending_stress</div>
<div class="row" style="top:107px;left:235px">9.14378</div>
<div class="abs" style="left:0;top:124px;width:385px;height:17px;"></div>
<div class="row" style="top:124px;left:6px">Fastener1_Copy_axial_force</div>
<div class="row" style="top:124px;left:235px">-84.6944</div>
<div class="abs" style="left:0;top:141px;width:385px;height:17px;"></div>
<div class="row" style="top:141px;left:6px">Fastener1_Copy_axial_stress</div>
<div class="row" style="top:141px;left:235px">-0.748863</div>
<div class="abs" style="left:0;top:158px;width:385px;height:17px;"></div>
<div class="row" style="top:158px;left:6px">Fastener1_Copy_bending_moment</div>
<div class="row" style="top:158px;left:235px">1575</div>
<div class="abs" style="left:0;top:175px;width:385px;height:17px;"></div>
<div class="row" style="top:175px;left:6px">Fastener1_Copy_bending_stress</div>
<div class="row" style="top:175px;left:235px">9.28405</div>
<div class="abs" style="left:0;top:192px;width:385px;height:17px;"></div>
<div class="row" style="top:192px;left:6px">Fastener1_axial_force</div>
<div class="row" style="top:192px;left:235px">-8.70572</div>
<div class="abs" style="left:0;top:209px;width:385px;height:17px;"></div>
<div class="row" style="top:209px;left:6px">Fastener1_axial_stress</div>
<div class="row" style="top:209px;left:235px">-0.0769755</div>
<div class="abs" style="left:385px;top:22px;width:15px;height:205px;background:#dadada"></div>
<div class="abs" style="left:385px;top:22px;width:15px;height:14px;background:#f0f0f0;border:1px solid #e4e4e4"></div>
<div class="abs" style="left:389px;top:27px;border-left:4px solid transparent;border-right:4px solid transparent;border-bottom:4px solid #a0a0a0"></div>
<div class="abs" style="left:385px;top:110px;width:15px;height:40px;background:#f7f7f7;border:1px solid #b8b8b8"></div>
<div class="abs" style="left:385px;top:211px;width:15px;height:15px;background:#f0f0f0;border:1px solid #e4e4e4"></div>
<div class="abs" style="left:389px;top:217px;border-left:4px solid transparent;border-right:4px solid transparent;border-top:4px solid #a0a0a0"></div>
</div>
<div class="btn" style="left:11px;top:425px;width:124px;height:23px;line-height:21px;font-size:11.8px">Create annotation...</div>
<div class="btn" style="left:330px;top:423px;width:40px;height:28px"><svg width="38" height="26"><g fill="#333"><rect x="12" y="7" width="14" height="2.4"/><rect x="12" y="10.6" width="14" height="2.4"/><rect x="12" y="14.2" width="14" height="2.4"/><rect x="12" y="17.8" width="14" height="2.4"/></g></svg></div>
<div class="btn" style="left:374px;top:423px;width:40px;height:28px"><svg width="38" height="26"><g fill="#333"><rect x="12" y="7" width="14" height="1"/><rect x="12" y="11" width="14" height="1"/><rect x="12" y="15" width="14" height="1"/><rect x="12" y="19" width="14" height="1"/></g></svg></div>
<div class="abs" style="left:0;top:467px;width:424px;height:1px;background:#c8c8c8"></div>
<div class="btn" style="left:365px;top:478px;width:49px;height:23px;line-height:21px;font-size:11.6px">Close</div>
</div>
</div></body></html>
